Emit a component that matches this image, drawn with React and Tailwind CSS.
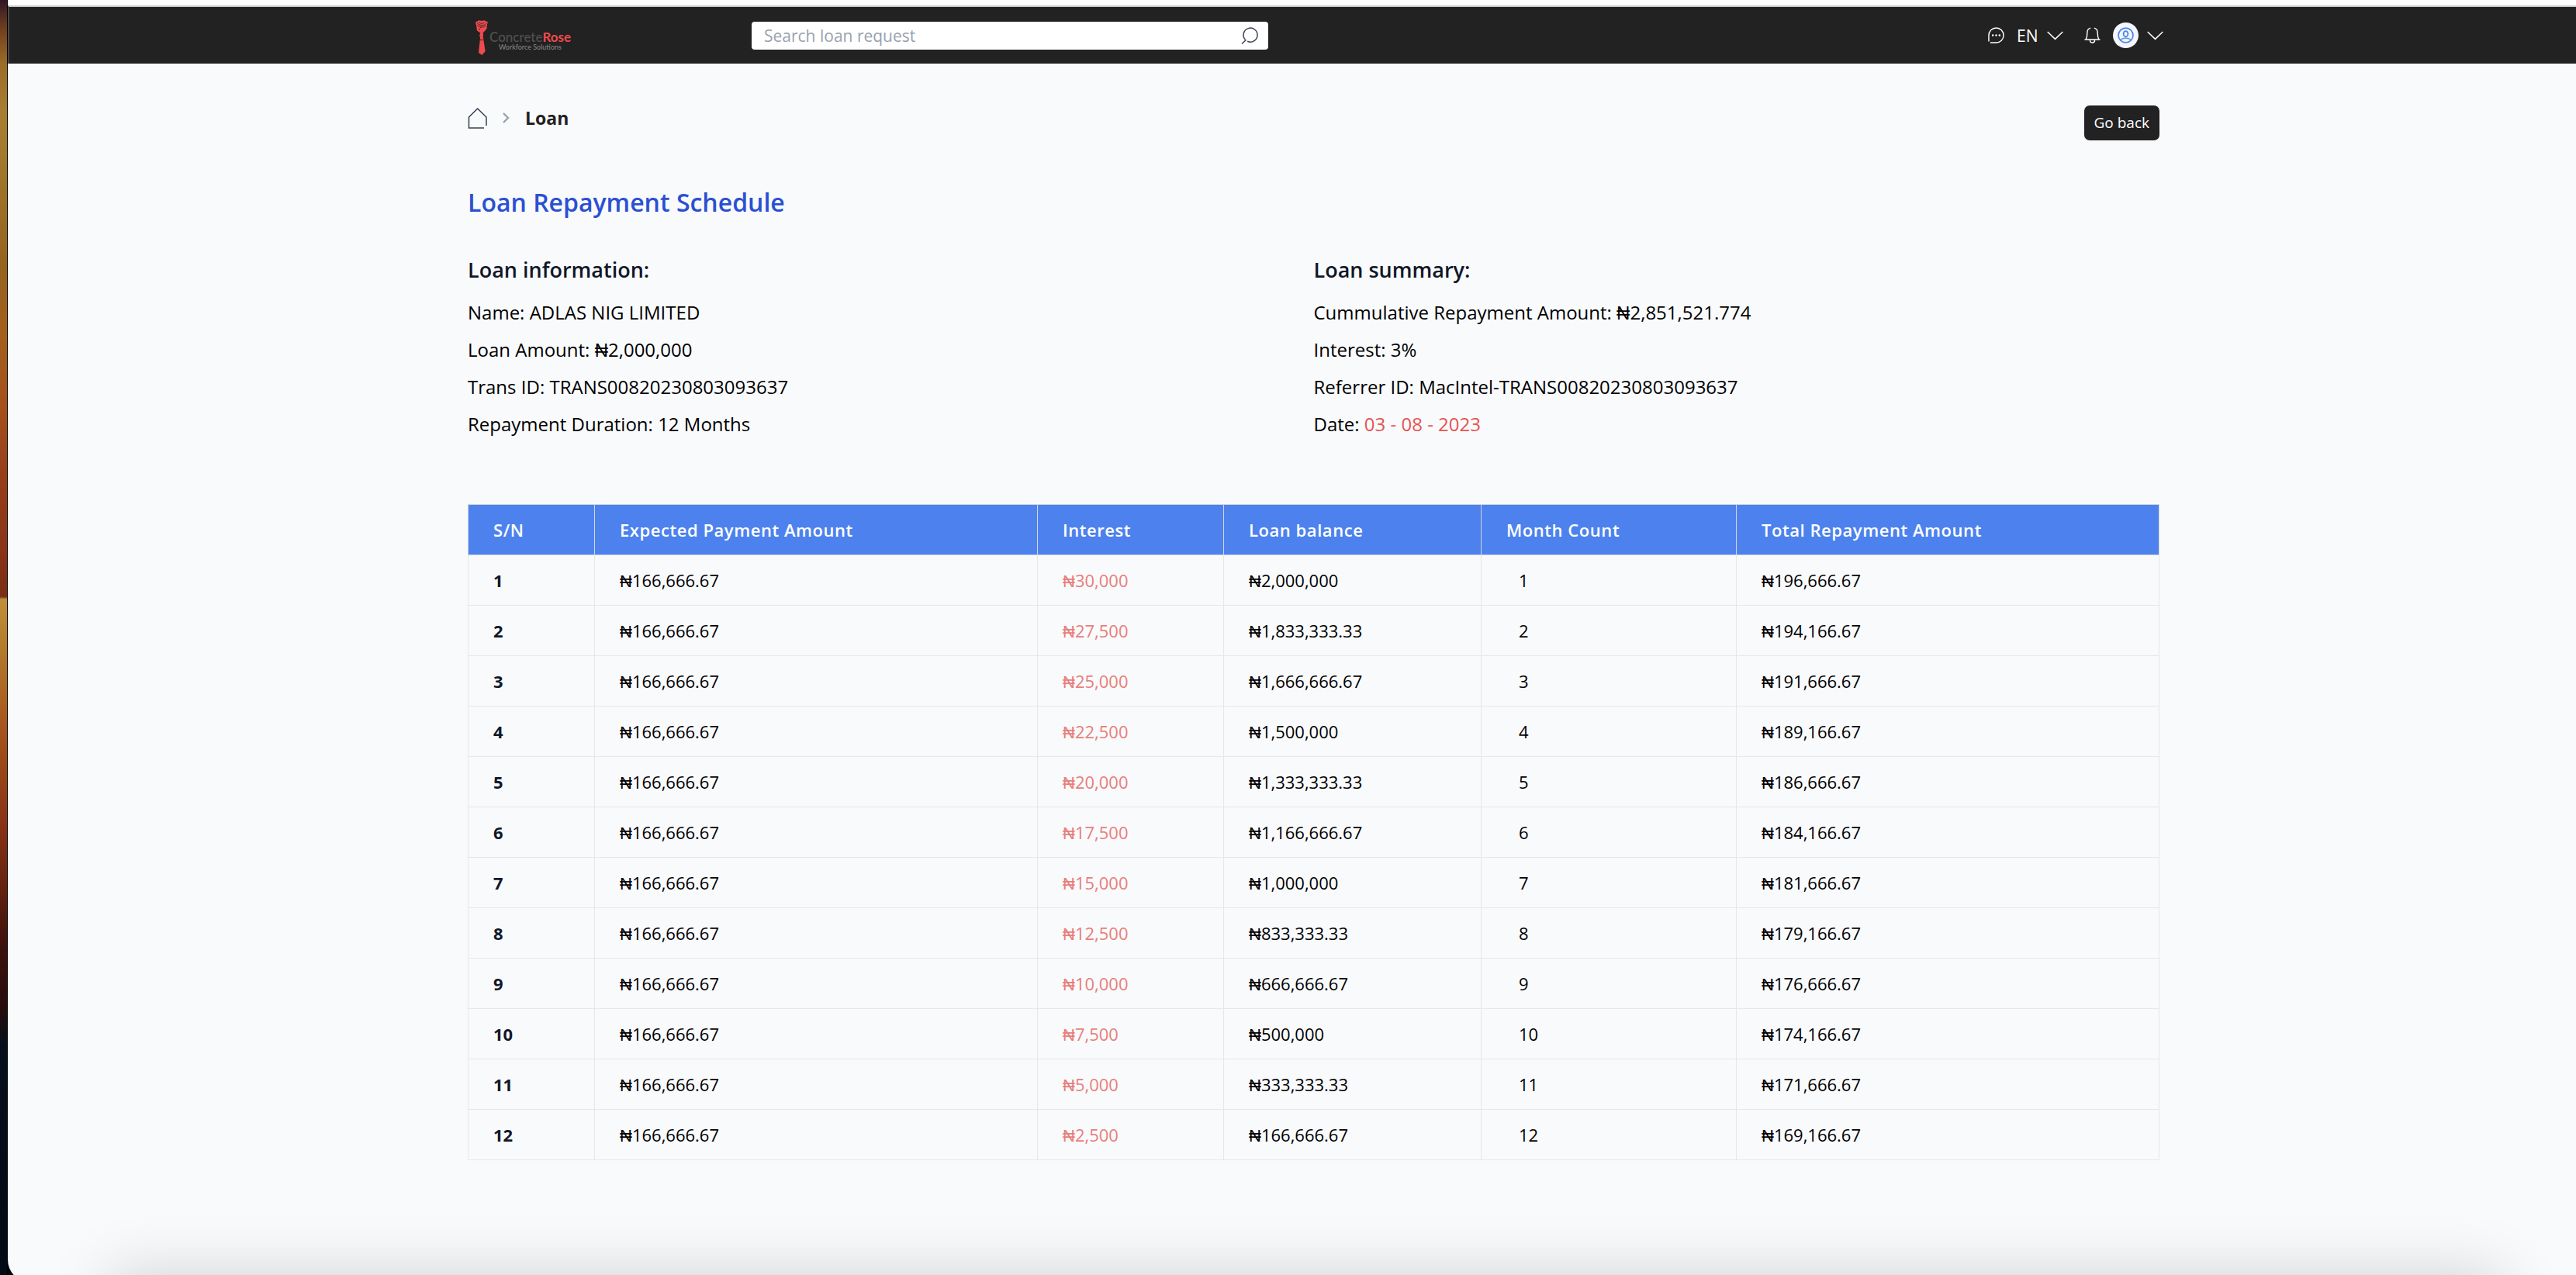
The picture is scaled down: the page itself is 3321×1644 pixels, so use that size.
import React, { useState } from 'react'

const info = [
  ['Name', 'ADLAS NIG LIMITED'],
  ['Loan Amount', <Naira amount="2,000,000" />],
  ['Trans ID', 'TRANS00820230803093637'],
  ['Repayment Duration', '12 Months'],
]

const summary = [
  ['Cummulative Repayment Amount', <Naira amount="2,851,521.774" />],
  ['Interest', '3%'],
  ['Referrer ID', 'MacIntel-TRANS00820230803093637'],
]

const rows = [
  ['30,000', '2,000,000', '196,666.67'],
  ['27,500', '1,833,333.33', '194,166.67'],
  ['25,000', '1,666,666.67', '191,666.67'],
  ['22,500', '1,500,000', '189,166.67'],
  ['20,000', '1,333,333.33', '186,666.67'],
  ['17,500', '1,166,666.67', '184,166.67'],
  ['15,000', '1,000,000', '181,666.67'],
  ['12,500', '833,333.33', '179,166.67'],
  ['10,000', '666,666.67', '176,666.67'],
  ['7,500', '500,000', '174,166.67'],
  ['5,000', '333,333.33', '171,666.67'],
  ['2,500', '166,666.67', '169,166.67'],
]

const headings = [
  'S/N',
  'Expected Payment Amount',
  'Interest',
  'Loan balance',
  'Month Count',
  'Total Repayment Amount',
]

function Naira({ amount }) {
  return (
    <>
      <span className="leading-none font-['Liberation_Sans','Noto_Sans',sans-serif]">₦</span>{amount}
    </>
  )
}

function Icon({ className, children, viewBox = '0 0 24 24', strokeWidth = 1.5 }) {
  return (
    <svg
      className={className}
      viewBox={viewBox}
      fill="none"
      stroke="currentColor"
      strokeWidth={strokeWidth}
      aria-hidden="true"
    >
      {children}
    </svg>
  )
}

function ChevronDown() {
  return (
    <Icon className="h-3 w-[21px]" viewBox="0 0 22 12">
      <path d="M.7.8 11 10.6 21.3.8" />
    </Icon>
  )
}

function Logo() {
  return (
    <a href="#" className="flex items-center pt-[6px] pl-[15px]" aria-label="ConcreteRose Workforce Solutions">
      <svg className="h-[46px] w-4" viewBox="0 0 16 46" aria-hidden="true">
        <path
          fill="#ef4a4e"
          d="M0 2.500 3 1l2-.8L8 1l3-.8 2 .8 3 1.500-1 3-.5 5.500-3 3.500-2 2 .7 2-.5 3 3 18.500L8.500 45 4 42l2-18.500-.7-4 1-3L2 13.500 1 7Z"
        />
        <path
          fill="none"
          stroke="#222"
          strokeWidth=".8"
          d="M2 3c2 3 4 3.500 7 3.500S13.500 5 14 3M5 2c0 3 6 3 6 .5M2 6.500c3 2 6 2.500 7 2.500s4-1 5-2.500M5 13c0-2 1-3.500 3-4"
        />
        <path stroke="#222" strokeWidth="1" d="M5.500 25.500h4" />
      </svg>
      <span className="ml-[2px] mt-2 flex flex-col font-[Lato]">
        <span className="text-[17px] leading-[16px] font-medium text-[#505050]">
          Concrete<span className="font-bold text-[#ef4a4e]">Rose</span>
        </span>
        <span className="pl-3 text-[9px] leading-[10px] text-[#8a8a8a]">Workforce Solutions</span>
      </span>
    </a>
  )
}

function Header() {
  const [query, setQuery] = useState('')

  return (
    <header className="border-t-2 border-l-2 border-t-[#c9c9c9] border-l-[#4b4b4b] bg-[#222] pl-[54px]">
      <div className="mx-auto flex h-[73px] max-w-[2191px] items-center text-white">
        <div className="w-[371px] shrink-0">
          <Logo />
        </div>
        <form
          onSubmit={(e) => e.preventDefault()}
          className="flex h-9 w-[666px] items-center rounded-[4px] bg-white px-4"
        >
          <input
            type="search"
            aria-label="Search loan request"
            placeholder="Search loan request"
            value={query}
            onChange={(e) => setQuery(e.target.value)}
            className="min-w-0 flex-1 bg-transparent text-[21px] leading-9 text-gray-800 outline-none placeholder:text-gray-400"
          />
          <button type="submit" aria-label="Search" className="-mr-1 text-gray-700">
            <Icon className="size-6">
              <path d="M9.200 19.300a9 9 0 1 0-3-2.300M7.500 17.200 2 22.500" />
            </Icon>
          </button>
        </form>
        <div className="ml-auto flex items-center">
          <button type="button" aria-label="Messages">
            <Icon className="size-[21px]" viewBox="0 0 22 22">
              <path d="M1 19.500V11A10 10 0 1 1 11 21H3" />
              <path d="M6.500 11h.01M11 11h.01M15.500 11h.01" strokeWidth="2.600" strokeLinecap="round" />
            </Icon>
          </button>
          <label className="ml-4 flex items-center">
            <select
              aria-label="Language"
              className="w-[39px] appearance-none bg-transparent text-[21px] leading-8 outline-none"
            >
              <option>EN</option>
            </select>
            <ChevronDown />
          </label>
          <button type="button" aria-label="Notifications" className="ml-[27px]">
            <Icon className="size-[21px]" viewBox="0 0 22 22">
              <path d="M8.500 1.200C5.500 2 4 4.500 4 7.500c0 4-.6 7-1.600 9M13.500 1.200C16.500 2 18 4.500 18 7.500c0 4 .6 7 1.600 9M.5 16.700h21M7.800 17.500c0 4.600 6.400 4.600 6.400 0" />
            </Icon>
          </button>
          <button type="button" aria-label="Account" className="ml-4 flex items-center gap-[11px]">
            <span className="flex size-[33px] items-center justify-center rounded-full bg-[#f4f6fc] text-[#4d82ee]">
              <Icon className="size-[21px]" viewBox="0 0 22 22" strokeWidth={1.8}>
                <circle cx="11" cy="11" r="9.900" />
                <ellipse cx="11" cy="9" rx="3.100" ry="3.700" />
                <path stroke="#5fa3cf" d="M3.800 17.200c3.500-3.200 10.900-3.200 14.400 0" />
              </Icon>
            </span>
            <ChevronDown />
          </button>
        </div>
      </div>
    </header>
  )
}

function Detail({ label, children }) {
  return (
    <p className="text-[24px] leading-[48px] text-black">
      {label}: {children}
    </p>
  )
}

function ScheduleTable() {
  return (
    <table className="mt-[79px] w-full table-fixed border-collapse text-left text-[22px] leading-8">
      <colgroup>
        <col className="w-[163px]" />
        <col className="w-[571px]" />
        <col className="w-[240px]" />
        <col className="w-[332px]" />
        <col className="w-[329px]" />
        <col className="w-[545px]" />
      </colgroup>
      <thead>
        <tr className="h-[65px] bg-[#4d82ee] text-white">
          {headings.map((h) => (
            <th key={h} scope="col" className="border border-gray-300 px-8 font-semibold tracking-wide">
              {h}
            </th>
          ))}
        </tr>
      </thead>
      <tbody>
        {rows.map(([interest, balance, total], i) => (
          <tr key={i} className="h-[65px] text-black">
            <th scope="row" className="border border-gray-200 px-8 font-bold text-gray-900">{i + 1}</th>
            <td className="border border-gray-200 px-8"><Naira amount="166,666.67" /></td>
            <td className="border border-gray-200 px-8 text-[#e87e7a]"><Naira amount={interest} /></td>
            <td className="border border-gray-200 px-8"><Naira amount={balance} /></td>
            <td className="border border-gray-200 px-12">{i + 1}</td>
            <td className="border border-gray-200 px-8"><Naira amount={total} /></td>
          </tr>
        ))}
      </tbody>
    </table>
  )
}

export default function App() {
  return (
    <div className="flex min-h-screen overflow-hidden bg-[#01060d] font-['Open_Sans','Noto_Sans',sans-serif]">
      {/* wallpaper showing past the window edge */}
      <div className="w-[10px] shrink-0 border-r border-black bg-[linear-gradient(180deg,#2e1626_0%,#6a3a20_2%,#9c6c28_5%,#a87f30_9%,#a07528_14%,#96621f_21%,#a3601c_26%,#a5501a_32%,#983f19_37%,#8a3518_43%,#7a2d15_46.8%,#c09038_47%,#b07428_52%,#a85c20_56%,#a04c18_59%,#8c3616_64%,#6a2410_69%,#3f120c_74%,#270c0c_79%,#06101a_82%,#020a14_100%)]" />

      <div className="relative -mb-[10px] min-w-0 flex-1 overflow-hidden rounded-bl-[30px] bg-[#f9fafc] pt-[7px] shadow-[inset_0_7px_0_white]">
        <Header />

        <main className="pb-36 pl-14">
          <div className="mx-auto max-w-[2181px] pt-[54px]">
            <div className="flex items-start justify-between">
              <nav aria-label="Breadcrumb" className="flex h-8 items-center">
                <a href="#" aria-label="Home" className="text-gray-700">
                  <Icon className="h-[27px] w-[25px]" viewBox="0 0 25 27">
                    <path d="M21 26H1.500V12L12.700 1 24 12v11" />
                  </Icon>
                </a>
                <Icon className="mx-5 h-[14px] w-[9px] text-gray-400" viewBox="0 0 9 14" strokeWidth={2.4}>
                  <path d="m1 1 6 6-6 6" />
                </Icon>
                <span className="text-[23px] leading-8 font-bold text-[#222]">Loan</span>
              </nav>
              <button type="button" className="h-[45px] rounded-[7px] bg-[#222] px-[13px] text-[19px] text-white">
                Go back
              </button>
            </div>

            <h1 className="mt-[58px] text-[32px] leading-[44px] font-semibold text-[#2a50d2]">
              Loan Repayment Schedule
            </h1>

            <div className="mt-[46px] grid grid-cols-2">
              <section>
                <h2 className="mb-3 text-[27px] leading-[38px] font-semibold text-gray-900">Loan information:</h2>
                {info.map(([label, value]) => (
                  <Detail key={label} label={label}>{value}</Detail>
                ))}
              </section>
              <section>
                <h2 className="mb-3 text-[27px] leading-[38px] font-semibold text-gray-900">Loan summary:</h2>
                {summary.map(([label, value]) => (
                  <Detail key={label} label={label}>{value}</Detail>
                ))}
                <Detail label="Date">
                  <span className="text-[#e5544e]">03 - 08 - 2023</span>
                </Detail>
              </section>
            </div>

            <ScheduleTable />
          </div>
        </main>

        {/* soft shade rising from below the window */}
        <div className="pointer-events-none absolute right-[95px] -bottom-[190px] left-[130px] h-[200px] shadow-[0_0_80px_rgba(0,0,0,0.17)]" />
      </div>
    </div>
  )
}
